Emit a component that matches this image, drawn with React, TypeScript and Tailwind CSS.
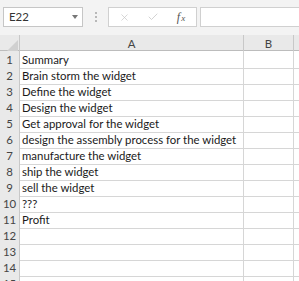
import { X, Check } from 'lucide-react';

const rows = [
  'Summary',
  'Brain storm the widget',
  'Define the widget',
  'Design the widget',
  'Get approval for the widget',
  'design the assembly process for the widget',
  'manufacture the widget',
  'ship the widget',
  'sell the widget',
  '???',
  'Profit',
  '',
  '',
  '',
  '',
];

export default function App() {
  return (
    <div className="w-[299px] h-[281px] overflow-hidden bg-white text-[11.4px] font-['Lato','Liberation_Sans',sans-serif] select-none">
      {/* formula bar */}
      <div className="h-[35px] bg-[#f3f3f3] flex items-start pt-[7px] pl-[3px]">
        <div className="w-[80px] h-[20px] bg-white border border-[#c6c6c6] flex items-center justify-between pl-[5px] pr-[4px] text-[#333]">
          <span>E22</span>
          <span className="w-0 h-0 border-l-[3.5px] border-r-[3.5px] border-t-[4px] border-l-transparent border-r-transparent border-t-[#777]" />
        </div>
        <div className="w-[25px] h-[20px] flex flex-col items-center justify-center gap-[2px]">
          <span className="w-[2px] h-[2px] bg-[#b8b8b8]" />
          <span className="w-[2px] h-[2px] bg-[#b8b8b8]" />
          <span className="w-[2px] h-[2px] bg-[#b8b8b8]" />
        </div>
        <div className="w-[89px] h-[20px] bg-white border border-[#d0d0d0] flex items-center">
          <div className="w-[30px] flex justify-center"><X size={11} strokeWidth={1.5} className="text-[#c4c4c4]" /></div>
          <div className="w-[27px] flex justify-center"><Check size={12} strokeWidth={1.5} className="text-[#c4c4c4]" /></div>
          <div className="flex-1 flex justify-center items-baseline font-['Liberation_Serif',serif] italic text-[12px] text-[#555] leading-none">
            <span>f</span><span className="text-[9px] ml-[1px]">x</span>
          </div>
        </div>
        <div className="ml-[3px] flex-1 h-[20px] bg-white border border-[#d0d0d0] border-r-0" />
      </div>

      {/* column headers */}
      <div className="grid grid-cols-[20px_224px_50px_1fr] h-[16px] bg-[#e9e9e9] border-b border-[#bcbcbc] text-[#444]">
        <div className="border-r border-[#c8c8c8] flex items-end justify-end pr-[1px] pb-[1px]">
          <svg width="11" height="11" viewBox="0 0 11 11">
            <polygon points="11,0 11,11 0,11" fill="#d0d0d0" />
          </svg>
        </div>
        <div className="border-r border-[#c8c8c8] flex items-center justify-center">A</div>
        <div className="border-r border-[#c8c8c8] flex items-center justify-center">B</div>
        <div />
      </div>

      {/* rows */}
      {rows.map((text, i) => (
        <div key={i} className="grid grid-cols-[20px_224px_50px_1fr] h-[16px]">
          <div className="bg-[#e9e9e9] border-r border-b border-[#c8c8c8] flex items-center justify-center text-[#444]">{i + 1}</div>
          <div className="border-r border-b border-[#d6d6d6] flex items-center pl-[2px] text-[#1a1a1a] whitespace-nowrap">{text}</div>
          <div className="border-r border-b border-[#d6d6d6]" />
          <div className="border-b border-[#d6d6d6]" />
        </div>
      ))}
    </div>
  );
}
